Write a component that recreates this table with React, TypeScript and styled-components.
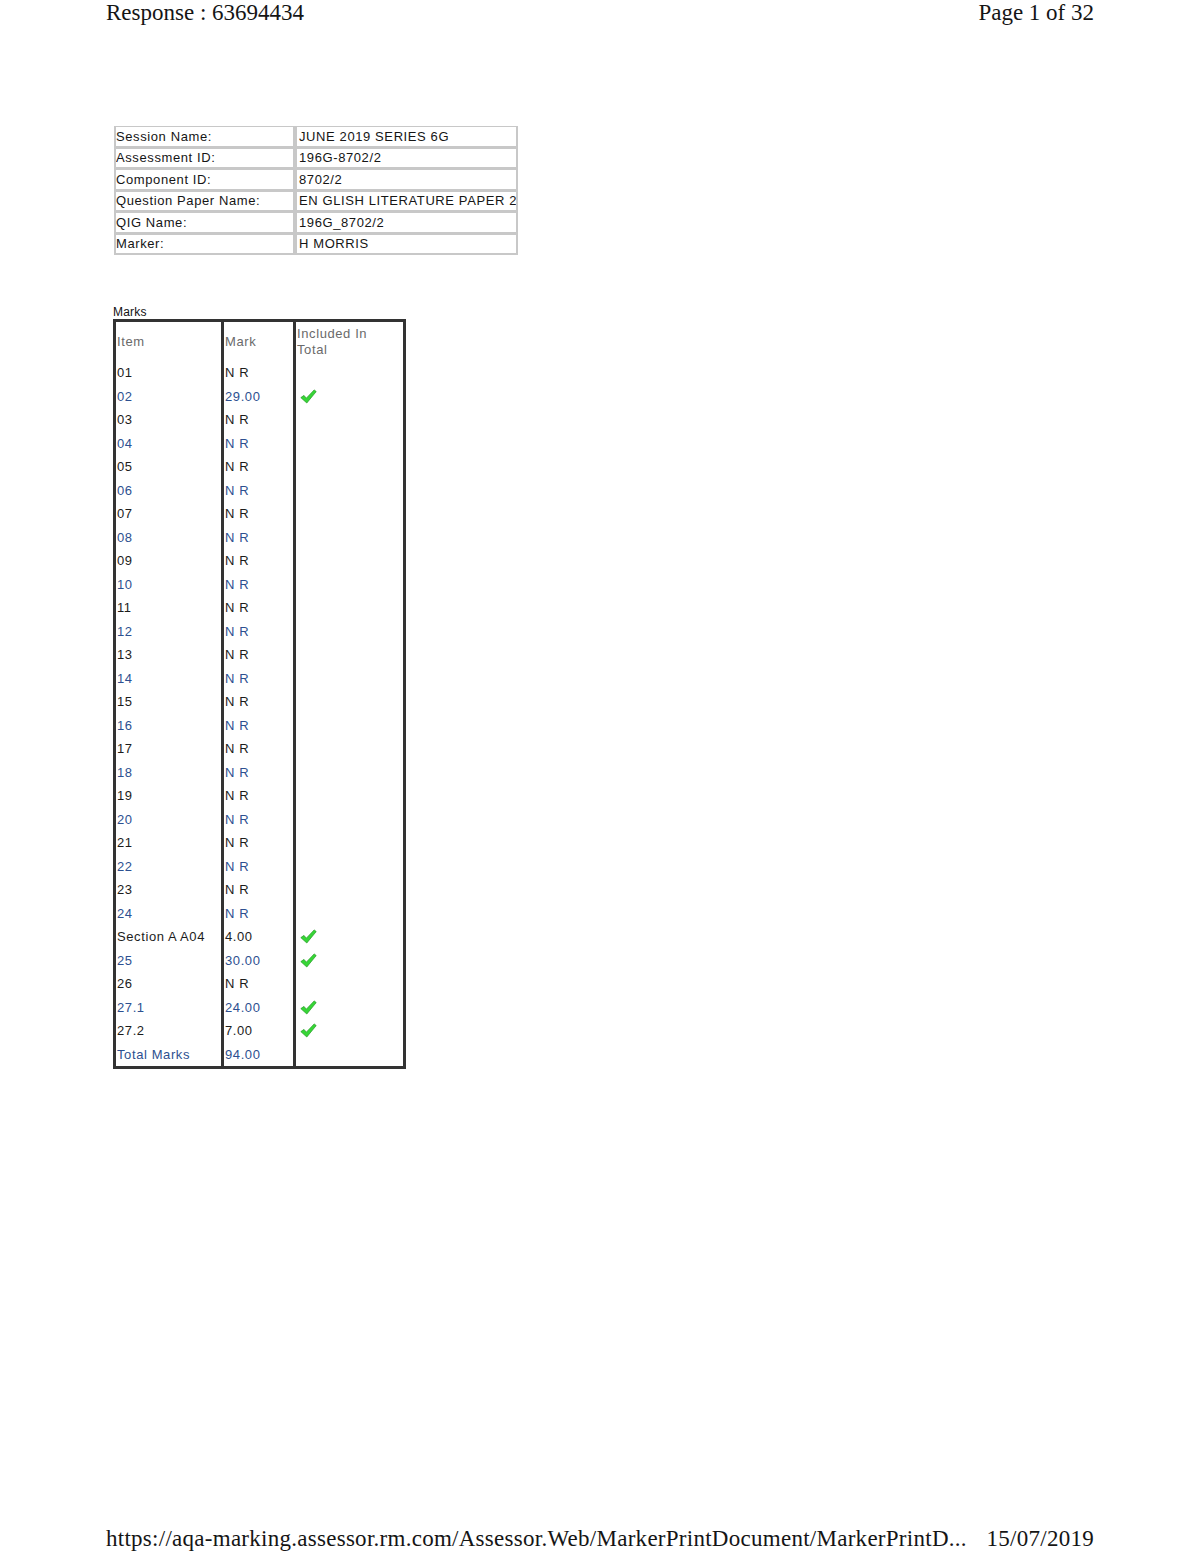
import React from "react";
import styled, { createGlobalStyle } from "styled-components";

const Global = createGlobalStyle`
  html, body { margin: 0; padding: 0; background: #ffffff; }
  * { box-sizing: border-box; }
`;

const Page = styled.div`
  width: 1200px;
  height: 1553px;
  display: flex;
  flex-direction: column;
  background: #ffffff;
`;

const PrintBar = styled.div`
  display: flex;
  justify-content: space-between;
  padding: 0 106px;
  font-family: "Liberation Serif", "Times New Roman", serif;
  font-size: 23px;
  line-height: 26px;
  color: #151515;
  white-space: nowrap;
`;

const FooterBar = styled(PrintBar)`
  margin-top: auto;
  margin-bottom: 1px;
  letter-spacing: 0.27px;
`;

const Content = styled.div`
  padding-left: 114px;
  padding-top: 100px;
  display: flex;
  flex-direction: column;
  font-family: "Liberation Sans", Arial, sans-serif;
  font-size: 13px;
  letter-spacing: 0.6px;
`;

const InfoGrid = styled.div`
  display: grid;
  grid-template-columns: 181px 223px;
  grid-auto-rows: 21.5px;
  width: 404px;
`;

const InfoCell = styled.div<{ $value?: boolean }>`
  border: 2px solid #c8c8c8;
  border-top-width: 1px;
  display: flex;
  align-items: center;
  padding-left: ${(p) => (p.$value ? "2px" : "0px")};
  color: #151515;
  white-space: nowrap;
  overflow: hidden;
`;

const MarksCaption = styled.div`
  margin-top: 50px;
  margin-left: -1px;
  font-size: 12px;
  letter-spacing: 0.2px;
  line-height: 14px;
  color: #111;
`;

const MarksGrid = styled.div`
  display: grid;
  margin-left: -1px;
  grid-template-columns: 105px 69px 107px;
  grid-template-rows: 39px;
  grid-auto-rows: 23.5px;
  column-gap: 3px;
  width: 293px;
  border: 3px solid #333333;
  background: #333333;
`;

const HeadCell = styled.div`
  background: #ffffff;
  display: flex;
  align-items: center;
  padding-left: 1px;
  color: #6a6a6a;
  line-height: 16px;
  padding-right: 4px;
`;

const Cell = styled.div<{ $blue: boolean }>`
  background: #ffffff;
  display: flex;
  align-items: center;
  padding-left: 1px;
  color: ${(p) => (p.$blue ? "#2d5090" : "#1c1c1c")};
  white-space: nowrap;
`;

const CheckCell = styled.div`
  background: #ffffff;
  display: flex;
  align-items: center;
  padding-left: 4px;
`;

const Tick = () => (
  <svg width="17" height="15" viewBox="0 0 17 15">
    <path
      d="M0.8 8.6 L4 6.4 L6.3 9.2 L14.2 0.9 L16.2 2.6 L6.8 14 Z"
      fill="#36d636"
      stroke="#1f9a1f"
      strokeWidth="0.7"
      strokeLinejoin="round"
    />
  </svg>
);

const info: [string, string][] = [
  ["Session Name:", "JUNE 2019 SERIES 6G"],
  ["Assessment ID:", "196G-8702/2"],
  ["Component ID:", "8702/2"],
  ["Question Paper Name:", "EN GLISH LITERATURE PAPER 2"],
  ["QIG Name:", "196G_8702/2"],
  ["Marker:", "H MORRIS"],
];

type Row = { item: string; mark: string; inc: boolean };

const rows: Row[] = [];
for (let i = 1; i <= 24; i++) {
  const item = i < 10 ? `0${i}` : `${i}`;
  rows.push({ item, mark: i === 2 ? "29.00" : "N R", inc: i === 2 });
}
rows.push({ item: "Section A A04", mark: "4.00", inc: true });
rows.push({ item: "25", mark: "30.00", inc: true });
rows.push({ item: "26", mark: "N R", inc: false });
rows.push({ item: "27.1", mark: "24.00", inc: true });
rows.push({ item: "27.2", mark: "7.00", inc: true });
rows.push({ item: "Total Marks", mark: "94.00", inc: false });

export default function App() {
  return (
    <Page>
      <Global />
      <PrintBar>
        <span>Response : 63694434</span>
        <span>Page 1 of 32</span>
      </PrintBar>
      <Content>
        <InfoGrid>
          {info.map(([k, v]) => (
            <React.Fragment key={k}>
              <InfoCell>{k}</InfoCell>
              <InfoCell $value>{v}</InfoCell>
            </React.Fragment>
          ))}
        </InfoGrid>
        <MarksCaption>Marks</MarksCaption>
        <MarksGrid>
          <HeadCell>Item</HeadCell>
          <HeadCell>Mark</HeadCell>
          <HeadCell>Included In Total</HeadCell>
          {rows.map((r, i) => {
            const blue = i % 2 === 1;
            return (
              <React.Fragment key={r.item}>
                <Cell $blue={blue}>{r.item}</Cell>
                <Cell $blue={blue}>{r.mark}</Cell>
                <CheckCell>{r.inc ? <Tick /> : null}</CheckCell>
              </React.Fragment>
            );
          })}
        </MarksGrid>
      </Content>
      <FooterBar>
        <span>https://aqa-marking.assessor.rm.com/Assessor.Web/MarkerPrintDocument/MarkerPrintD...</span>
        <span>15/07/2019</span>
      </FooterBar>
    </Page>
  );
}
